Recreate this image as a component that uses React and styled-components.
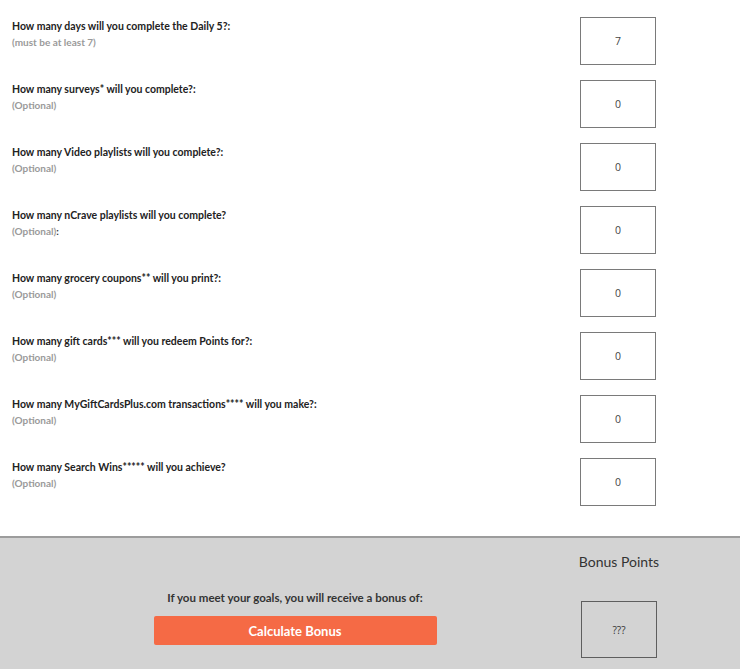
import React from "react";
import styled, { createGlobalStyle } from "styled-components";

const Global = createGlobalStyle`
  html, body { margin: 0; padding: 0; background: #fff; }
  body { font-family: Lato, "Open Sans", sans-serif; }
`;

const Page = styled.div`
  width: 740px;
  height: 669px;
  overflow: hidden;
  display: flex;
  flex-direction: column;
`;

const Form = styled.div`
  padding: 17px 84px 0 12px;
  height: 536px;
  flex-shrink: 0;
  box-sizing: border-box;
`;

const Row = styled.div`
  display: grid;
  grid-template-columns: 1fr 76px;
  height: 63px;
`;

const Label = styled.div`
  display: flex;
  flex-direction: column;
  padding-top: 3px;
`;

const Question = styled.div`
  font-size: 10.5px;
  font-weight: 700;
  color: #222;
  line-height: 13px;
`;

const Note = styled.div`
  font-size: 10px;
  font-weight: 700;
  color: #9a9a9a;
  line-height: 12px;
  margin-top: 3px;
`;

const Colon = styled.span`
  color: #333;
`;

const Box = styled.input`
  width: 76px;
  height: 48px;
  box-sizing: border-box;
  border: 1px solid #7a7a7a;
  background: #fff;
  text-align: center;
  font-family: "Open Sans", sans-serif;
  font-size: 10.5px;
  color: #444;
  padding: 0;
  outline: none;
`;

const Bonus = styled.div`
  flex: 1;
  background: #d3d3d3;
  border-top: 2px solid #9c9c9c;
  display: grid;
  grid-template-columns: 580px 76px;
`;

const Left = styled.div`
  display: flex;
  flex-direction: column;
  align-items: center;
  padding-top: 53px;
  padding-left: 10px;
`;

const Prompt = styled.div`
  font-size: 11.5px;
  font-weight: 700;
  color: #333;
  line-height: 13px;
`;

const CalcButton = styled.button`
  margin-top: 12px;
  width: 283px;
  height: 29px;
  border: none;
  border-radius: 2px;
  background: #f56a45;
  color: #fff;
  font-family: Lato, sans-serif;
  font-size: 13px;
  font-weight: 700;
`;

const Right = styled.div`
  display: flex;
  flex-direction: column;
  align-items: center;
  padding-top: 15px;
`;

const BonusTitle = styled.div`
  font-size: 14px;
  color: #333;
  line-height: 17px;
  white-space: nowrap;
  margin-left: 2px;
`;

const Result = styled.div`
  margin-top: 31px;
  margin-left: 2px;
  width: 76px;
  height: 57px;
  box-sizing: border-box;
  border: 1px solid #5e5e5e;
  display: flex;
  align-items: center;
  justify-content: center;
  font-family: "Open Sans", sans-serif;
  font-size: 10px;
  color: #333;
`;

const rows = [
  { q: "How many days will you complete the Daily 5?:", n: "(must be at least 7)", v: "7" },
  { q: "How many surveys* will you complete?:", n: "(Optional)", v: "0" },
  { q: "How many Video playlists will you complete?:", n: "(Optional)", v: "0" },
  { q: "How many nCrave playlists will you complete?", n: "(Optional)", colon: true, v: "0" },
  { q: "How many grocery coupons** will you print?:", n: "(Optional)", v: "0" },
  { q: "How many gift cards*** will you redeem Points for?:", n: "(Optional)", v: "0" },
  { q: "How many MyGiftCardsPlus.com transactions**** will you make?:", n: "(Optional)", v: "0" },
  { q: "How many Search Wins***** will you achieve?", n: "(Optional)", v: "0" },
];

export default function App() {
  return (
    <Page>
      <Global />
      <Form>
        {rows.map((r, i) => (
          <Row key={i}>
            <Label>
              <Question>{r.q}</Question>
              <Note>
                {r.n}
                {r.colon && <Colon>:</Colon>}
              </Note>
            </Label>
            <Box defaultValue={r.v} readOnly />
          </Row>
        ))}
      </Form>
      <Bonus>
        <Left>
          <Prompt>If you meet your goals, you will receive a bonus of:</Prompt>
          <CalcButton>Calculate Bonus</CalcButton>
        </Left>
        <Right>
          <BonusTitle>Bonus Points</BonusTitle>
          <Result>???</Result>
        </Right>
      </Bonus>
    </Page>
  );
}
